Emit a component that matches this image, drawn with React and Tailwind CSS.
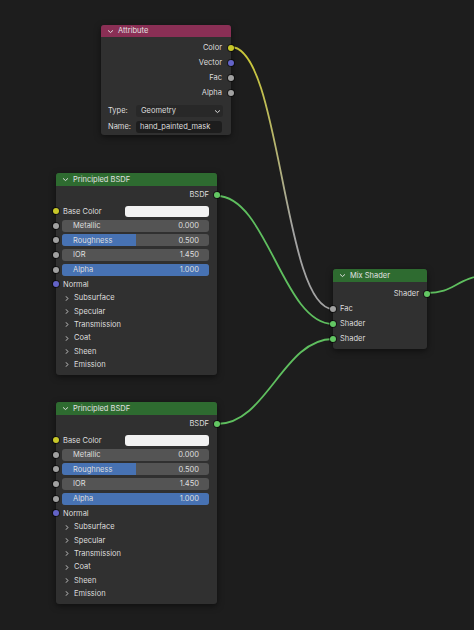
import React from 'react';

const Socket = ({ side, color }) => (
  <span
    className={`absolute top-1/2 -translate-y-1/2 w-[6px] h-[6px] rounded-full ring-1 ring-black/50 ${color} ${
      side === 'left' ? 'left-[-3px]' : 'right-[-3px]'
    }`}
  />
);

const ChevronDown = ({ className = '' }) => (
  <svg className={className} width="7" height="7" viewBox="0 0 8 8" fill="none" stroke="currentColor" strokeWidth="1.1" strokeLinecap="round" strokeLinejoin="round">
    <path d="M1.5 3l2.5 2.2L6.5 3" />
  </svg>
);

const ChevronRight = () => (
  <svg width="6" height="7" viewBox="0 0 8 8" fill="none" stroke="currentColor" strokeWidth="1.1" strokeLinecap="round" strokeLinejoin="round">
    <path d="M3 1.5l2.2 2.5L3 6.5" />
  </svg>
);

const Header = ({ title, color, h }) => (
  <div className={`flex items-center gap-[4px] pl-[6px] rounded-t-[3px] text-[#e2e2e2] ${color} ${h}`}>
    <ChevronDown />
    <span>{title}</span>
  </div>
);

const OutputRow = ({ label, color, h = 'h-[15px]', pr = 'pr-[9px]' }) => (
  <div className={`relative flex items-center justify-end ${h} ${pr}`}>
    <span>{label}</span>
    <Socket side="right" color={color} />
  </div>
);

const Slider = ({ label, value, fill }) => (
  <div className="relative flex items-center h-[14.6px]">
    <Socket side="left" color="bg-[#a1a1a1]" />
    <div className="relative ml-[6px] mr-[8px] flex-1 h-[12px] rounded-[3px] bg-[#545454] overflow-hidden">
      {fill > 0 && <div className="absolute inset-y-0 left-0 bg-[#4772b3]" style={{ width: `${fill * 100}%` }} />}
      <div className="relative flex items-center justify-between h-full pl-[11px] pr-[10px]">
        <span>{label}</span>
        <span>{value}</span>
      </div>
    </div>
  </div>
);

const Panel = ({ label }) => (
  <div className="flex items-center gap-[4px] h-[13.3px] pl-[8px]">
    <ChevronRight />
    <span>{label}</span>
  </div>
);

const Principled = ({ top }) => (
  <div className={`absolute left-[56px] w-[161px] rounded-[3px] bg-[#303030] shadow-[0_2px_6px_rgba(0,0,0,0.5)] ${top}`}>
    <Header title="Principled BSDF" color="bg-[#2e6b30]" h="h-[13px]" />
    <div className="pt-[2px] pb-[4px]">
      <OutputRow label="BSDF" color="bg-[#63c763]" h="h-[14px]" pr="pr-[8px]" />
      <div className="relative flex items-center h-[14.6px] mt-[2px]">
        <Socket side="left" color="bg-[#c7c729]" />
        <span className="pl-[7px] w-[69px]">Base Color</span>
        <div className="flex-1 mr-[8px] h-[11px] rounded-[3px] bg-[#f2f2f2]" />
      </div>
      <Slider label="Metallic" value="0.000" fill={0} />
      <Slider label="Roughness" value="0.500" fill={0.5} />
      <Slider label="IOR" value="1.450" fill={0} />
      <Slider label="Alpha" value="1.000" fill={1} />
      <div className="relative flex items-center h-[14.6px] pl-[7px]">
        <Socket side="left" color="bg-[#6363c7]" />
        <span>Normal</span>
      </div>
      {['Subsurface', 'Specular', 'Transmission', 'Coat', 'Sheen', 'Emission'].map((p) => (
        <Panel key={p} label={p} />
      ))}
    </div>
  </div>
);

export default function App() {
  return (
    <div className="relative w-[474px] h-[630px] overflow-hidden bg-[#1d1d1d] text-[7.5px] leading-none text-[#dedede] font-[Inter,'Noto_Sans',sans-serif]">
      {/* links */}
      <svg className="absolute inset-0" width="474" height="630" viewBox="0 0 474 630" fill="none">
        <defs>
          <linearGradient id="colFac" gradientUnits="userSpaceOnUse" x1="0" y1="60" x2="0" y2="230">
            <stop offset="0" stopColor="#c9c63a" />
            <stop offset="1" stopColor="#a3a3a3" />
          </linearGradient>
        </defs>
        <g strokeWidth="1.8" strokeLinecap="round">
          <path d="M231 47 C281 47 283 309 333 309" stroke="url(#colFac)" />
          <path d="M217 196 C267 196 283 324 333 324" stroke="#5fbf5f" />
          <path d="M217 424 C267 424 283 339 333 339" stroke="#5fbf5f" />
          <path d="M427 293 C455 293 455 278 490 274" stroke="#5fbf5f" />
        </g>
      </svg>

      {/* Attribute */}
      <div className="absolute left-[101px] top-[25px] w-[130px] h-[110px] rounded-[3px] bg-[#303030] shadow-[0_2px_6px_rgba(0,0,0,0.5)]">
        <Header title="Attribute" color="bg-[#8a2f55]" h="h-[12px]" />
        <div className="pt-[3px]">
          <OutputRow label="Color" color="bg-[#c7c729]" />
          <OutputRow label="Vector" color="bg-[#6363c7]" />
          <OutputRow label="Fac" color="bg-[#a1a1a1]" />
          <OutputRow label="Alpha" color="bg-[#a1a1a1]" />
          <div className="flex items-center h-[14px] mt-[4px] pl-[7px] pr-[8px]">
            <span className="w-[28px]">Type:</span>
            <div className="flex-1 flex items-center justify-between h-[11.5px] rounded-[3px] bg-[#282828] pl-[5px] pr-[2px]">
              <span>Geometry</span>
              <ChevronDown />
            </div>
          </div>
          <div className="flex items-center h-[14px] mt-[2px] pl-[7px] pr-[9px]">
            <span className="w-[28px]">Name:</span>
            <div className="flex-1 flex items-center h-[11.5px] rounded-[3px] bg-[#1d1d1d] pl-[4px]">
              <span>hand_painted_mask</span>
            </div>
          </div>
        </div>
      </div>

      <Principled top="top-[173px]" />
      <Principled top="top-[402px]" />

      {/* Mix Shader */}
      <div className="absolute left-[333px] top-[269px] w-[94px] rounded-[3px] bg-[#303030] shadow-[0_2px_6px_rgba(0,0,0,0.5)]">
        <Header title="Mix Shader" color="bg-[#2e6b30]" h="h-[13px]" />
        <div className="pt-[4px] pb-[3px]">
          <OutputRow label="Shader" color="bg-[#63c763]" pr="pr-[8px]" />
          {[
            ['Fac', 'bg-[#a1a1a1]'],
            ['Shader', 'bg-[#63c763]'],
            ['Shader', 'bg-[#63c763]'],
          ].map(([l, c], i) => (
            <div key={i} className="relative flex items-center h-[15px] pl-[7px]">
              <Socket side="left" color={c} />
              <span>{l}</span>
            </div>
          ))}
        </div>
      </div>
    </div>
  );
}
